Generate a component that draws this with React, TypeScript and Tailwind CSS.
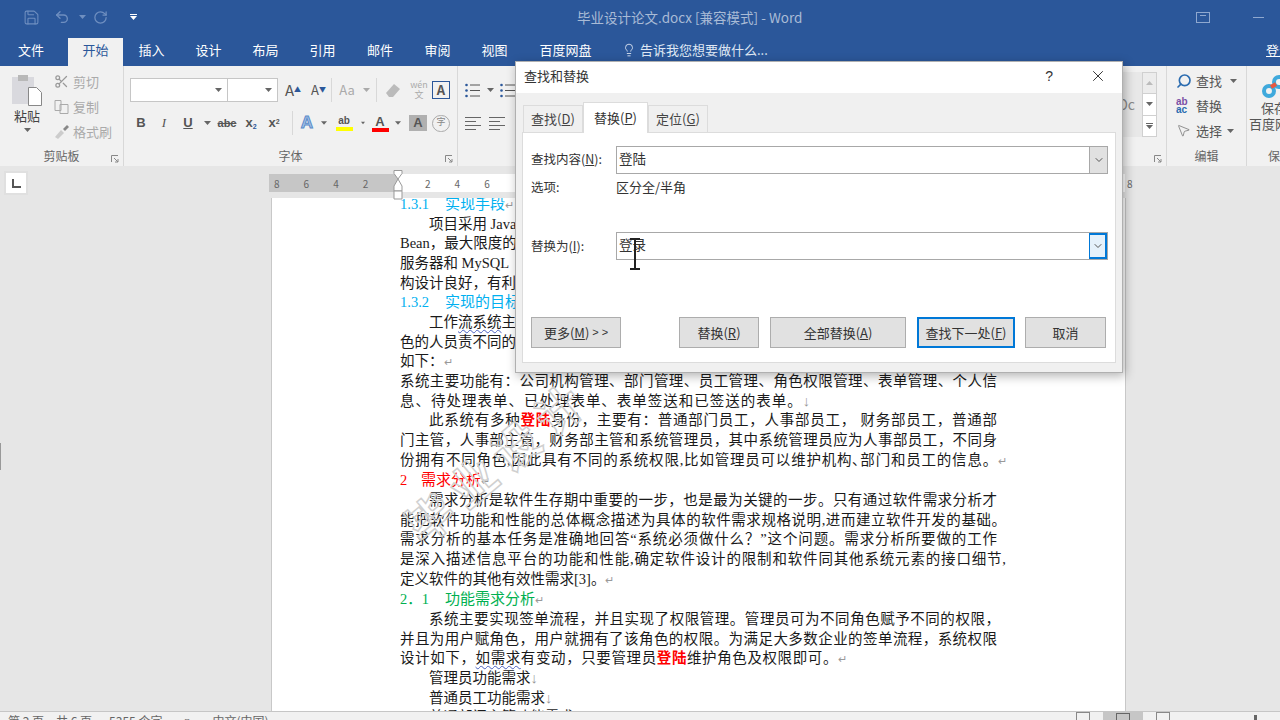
import React from "react";
import { Save, Undo2, RotateCw, Scissors, Lightbulb, Search, MousePointer2, X, ChevronDown } from "lucide-react";

const Caret = ({ c = "#666" }: { c?: string }) => (
  <svg width="7" height="4" viewBox="0 0 7 4"><path d="M0 0h7L3.5 4z" fill={c} /></svg>
);
const Corner = () => (
  <svg width="8" height="8" viewBox="0 0 8 8" fill="none" stroke="#888"><path d="M.5 7V.5H7" /><path d="M3 3l4 4M7 4v3H4" /></svg>
);
const Cell = ({ w, children, cls = "" }: { w: number; children?: React.ReactNode; cls?: string }) => (
  <div style={{ width: w }} className={"flex shrink-0 items-center justify-center " + cls}>{children}</div>
);
const Group = ({ w, label, corner, children, sep = true }: { w?: number; label: string; corner?: boolean; children: React.ReactNode; sep?: boolean }) => (
  <div style={w ? { width: w } : undefined} className={"relative flex h-full shrink-0 flex-col " + (w ? "" : "flex-1 ") + (sep ? "border-r border-[#d8d8d8]" : "")}>
    <div className="h-[80px] min-h-0">{children}</div>
    <div className="flex h-[20px] items-center justify-center text-[12px] text-[#666]">{label}</div>
    {corner && <div className="absolute bottom-[3px] right-[4px] flex"><Corner /></div>}
  </div>
);

const Lines = () => (
  <svg width="16" height="14" viewBox="0 0 16 14" stroke="#666"><path d="M0 1.5h16M0 5.5h11M0 9.5h16M0 13.5h11" /></svg>
);

const Bullets = () => (
  <svg width="15" height="15" viewBox="0 0 15 15"><g fill="#2b579a"><circle cx="1.5" cy="2" r="1.3" /><circle cx="1.5" cy="7.5" r="1.3" /><circle cx="1.5" cy="13" r="1.3" /></g><path d="M5 2h10M5 7.5h10M5 13h10" stroke="#555" /></svg>
);

const Page = ({ children, cls = "" }: { children: React.ReactNode; cls?: string }) => (
  <div className={"h-[19.68px] whitespace-nowrap leading-[19.68px] " + cls}>{children}</div>
);
const Just = ({ children, indent, w = 597 }: { children: React.ReactNode; indent?: boolean; w?: number }) => (
  <div style={{ width: w }} className={"h-[19.68px] whitespace-nowrap leading-[19.68px] [text-align:justify] [text-align-last:justify] " + (indent ? "pl-[29px]" : "")}>{children}</div>
);
const Red = ({ children }: { children: React.ReactNode }) => <span className="font-bold text-[#ff0000]">{children}</span>;
const Mark = ({ c }: { c: string }) => <span style={{ color: c }} className="text-[11px]">↵</span>;
const Head = ({ n, children, cls }: { n: string; children: React.ReactNode; cls: string }) => (
  <Page cls={cls}><span className="inline-block w-[45px]">{n}</span><span className="text-[15px]">{children}</span><Mark c="#999" /></Page>
);

const DlgBtn = ({ w, children, primary }: { w: number; children: React.ReactNode; primary?: boolean }) => (
  <div style={{ width: w }} className={"flex h-[31px] shrink-0 items-center justify-center bg-[#e1e1e1] text-[13px] text-[#333] " + (primary ? "border-2 border-[#0078d7]" : "border border-[#adadad]")}>{children}</div>
);

const Combo = ({ text, active }: { text: string; active?: boolean }) => (
  <div className="flex h-[28px] flex-1 items-stretch border border-[#a8a8a8] bg-white">
    <div className="flex-1 pl-[2px] text-[13.5px] leading-[22px] text-[#333]">{text}</div>
    <div className={"flex w-[18px] items-center justify-center border-l " + (active ? "border-2 border-[#0078d7] bg-[#e5f1fb]" : "border-[#a8a8a8] bg-[#e1e1e1]")}>
      <ChevronDown size={12} color="#555" />
    </div>
  </div>
);

const Wavy = ({ children }: { children: React.ReactNode }) => (
  <span className="underline decoration-[#4a5fc0] decoration-wavy decoration-1 underline-offset-2">{children}</span>
);

const tabs: [string, number][] = [["插入", 57], ["设计", 57], ["布局", 57], ["引用", 57], ["邮件", 58], ["审阅", 57], ["视图", 57], ["百度网盘", 85]];

export default function App() {
  return (
    <div className="relative flex h-[720px] w-[1280px] flex-col overflow-hidden bg-[#e6e6e6] font-['Noto_Sans_CJK_SC','Noto_Sans',sans-serif]">
      {/* Title bar */}
      <div className="flex h-[38px] shrink-0 items-center bg-[#2b579a] pb-[4px]">
        <div className="flex w-[577px] items-center pl-[23px]">
          <Save size={17} color="#6f8fc0" strokeWidth={1.5} />
          <Cell w={32} cls="ml-[6px]"><Undo2 size={16} color="#6f8fc0" /></Cell>
          <Cell w={8}><Caret c="#6f8fc0" /></Cell>
          <Cell w={24} cls="ml-[2px]"><RotateCw size={15} color="#6f8fc0" /></Cell>
          <div className="ml-[18px] flex flex-col items-center gap-[1px]"><div className="h-px w-[7px] bg-white" /><Caret c="#fff" /></div>
        </div>
        <div className="text-[13.5px] text-[#a9bbd6]">毕业设计论文.docx [兼容模式] - Word</div>
        <div className="ml-auto flex items-center">
          <div className="flex h-[11px] w-[14px] items-start justify-center border border-[#8fa8cf]"><div className="mt-[2px] h-[1px] w-[6px] bg-[#8fa8cf]" /></div>
          <div className="ml-[43px] mr-[16px] h-px w-[11px] bg-[#8fa8cf]" />
        </div>
      </div>
      {/* Tabs */}
      <div className="flex h-[28px] shrink-0 items-stretch bg-[#2b579a] text-[13px] text-white">
        <Cell w={62} cls="pb-[4px]">文件</Cell>
        <div className="ml-[6px] flex w-[55px] items-center justify-center bg-[#f1f1f1] pb-[4px] text-[#2b579a]">开始</div>
        {tabs.map(([t, w]) => <Cell key={t} w={w} cls="pb-[4px]">{t}</Cell>)}
        <div className="ml-[14px] flex items-center gap-[4px] pb-[4px] text-[13px] text-[#dfe7f3]"><Lightbulb size={14} strokeWidth={1.5} />告诉我您想要做什么...</div>
        <div className="ml-auto w-[14px] overflow-hidden whitespace-nowrap text-[13px] leading-[24px] underline">登录</div>
      </div>
      {/* Ribbon */}
      <div className="flex h-[100px] shrink-0 bg-[#f1f1f1] text-[#666]">
        <Group w={124} label="剪贴板" corner>
          <div className="flex h-full">
            <div className="flex w-[54px] flex-col items-center pt-[8px]">
              <svg width="32" height="32" viewBox="0 0 32 32"><rect x="1" y="3" width="22" height="27" fill="#d9d9de" /><rect x="7" y="1" width="10" height="6" fill="#b8b8b8" /><path d="M17.5 13.5h8l5 5v13h-13z" fill="#fff" stroke="#888" /></svg>
              <div className="mt-[1px] text-[13px] leading-[18px] text-[#444]">粘贴</div>
              <div className="mt-[3px]"><Caret /></div>
            </div>
            <div className="flex flex-col pt-[3px] text-[13px] text-[#aaa]">
              <div className="flex h-[25px] items-center gap-[4px]"><Scissors size={15} color="#999" />剪切</div>
              <div className="flex h-[25px] items-center gap-[4px]"><svg width="15" height="14" viewBox="0 0 15 14" fill="none" stroke="#aaa"><path d="M1 .5h6v10H1zM6 4.5h8v9H6z" /></svg>复制</div>
              <div className="flex h-[25px] items-center gap-[4px]"><svg width="15" height="14" viewBox="0 0 15 14"><path d="M1 12l6-7 3 3-6 6z" fill="#ccc" /><path d="M9 4l4-4 2 2-4 4z" fill="#888" /></svg>格式刷</div>
            </div>
          </div>
        </Group>
        <Group w={334} label="字体" corner>
          <div className="flex h-[36px] items-center pl-[6px] pt-[12px]">
            <div className="flex h-[24px] w-[98px] items-center justify-end border border-[#c6c6c6] bg-white pr-[5px]"><Caret /></div>
            <div className="flex h-[24px] w-[50px] items-center justify-end border border-l-0 border-[#c6c6c6] bg-white pr-[5px]"><Caret /></div>
            <Cell w={26} cls="ml-[2px] text-[15px] text-[#555]"><span>A<sup className="text-[7px] text-[#2b579a]">▲</sup></span></Cell>
            <Cell w={25} cls="text-[13px] text-[#555]"><span>A<sup className="text-[7px] text-[#2b579a]">▼</sup></span></Cell>
            <div className="h-[24px] w-px bg-[#d8d8d8]" />
            <Cell w={30} cls="text-[13px] text-[#aaa]">Aa</Cell><Cell w={8}><Caret c="#aaa" /></Cell>
            <div className="ml-[6px] h-[24px] w-px bg-[#d8d8d8]" />
            <Cell w={32}><svg width="16" height="16" viewBox="0 0 16 16"><path d="M1 11L9 2l6 5-7 8H4z" fill="#bbb" /></svg></Cell>
            <Cell w={16} cls="ml-[2px]"><div className="flex flex-col items-center text-[9px] leading-[10px] text-[#aaa]"><span>wén</span><span>文</span></div></Cell>
            <Cell w={18} cls="ml-[5px] h-[18px] border border-[#2b579a] text-[13px] font-bold text-[#555]">A</Cell>
          </div>
          <div className="flex h-[36px] items-center pl-[6px] pt-[6px] font-['Liberation_Sans','Noto_Sans_CJK_SC',sans-serif] text-[13px] font-bold text-[#555]">
            <Cell w={22}>B</Cell>
            <Cell w={24} cls="italic font-normal font-['Liberation_Serif',serif]">I</Cell>
            <Cell w={24} cls="underline">U</Cell>
            <Cell w={14}><Caret /></Cell>
            <Cell w={26} cls="text-[11px] line-through">abc</Cell>
            <Cell w={22}><span>x<sub className="text-[7px] text-[#2b579a]">2</sub></span></Cell>
            <Cell w={24}><span>x<sup className="text-[7px]">2</sup></span></Cell>
            <div className="ml-[6px] h-[24px] w-px bg-[#d8d8d8]" />
            <Cell w={28} cls="text-[17px] text-[#a9c4e8] [-webkit-text-stroke:1px_#5b8bc9]">A</Cell>
            <Cell w={6}><Caret /></Cell>
            <Cell w={34}><div className="flex flex-col items-center leading-[12px]"><span className="text-[10px] text-[#555]">ab</span><div className="h-[4px] w-[17px] bg-[#ffff00]" /></div></Cell>
            <Cell w={4}><Caret /></Cell>
            <Cell w={30}><div className="flex flex-col items-center leading-[13px]"><span className="text-[13px] text-[#555]">A</span><div className="h-[4px] w-[17px] bg-[#ff0000]" /></div></Cell>
            <Cell w={6}><Caret /></Cell>
            <Cell w={18} cls="ml-[8px] h-[16px] bg-[#b0b0b0] text-[#555]">A</Cell>
            <Cell w={18} cls="ml-[5px] h-[17px] rounded-full border border-[#aaa] text-[9px] font-normal text-[#888]">字</Cell>
          </div>
        </Group>
        <Group w={709} label="段落">
          <div className="flex h-full">
            <div className="flex flex-col">
              <div className="flex h-[36px] items-center pl-[7px] pt-[12px]"><Bullets /><Cell w={20}><Caret /></Cell><Bullets /></div>
              <div className="flex h-[36px] items-center gap-[8px] pl-[7px] pt-[6px]"><Lines /><Lines /></div>
            </div>
            <div className="ml-auto mr-[9px] mt-[6px] flex h-[65px] w-[35px] self-start">
              <div className="flex h-full w-[20px] items-center justify-end bg-[#e8e8e8] pr-[7px] text-[14px] text-[#888]">Oc</div>
              <div className="flex h-full w-[15px] flex-col border border-[#d0d0d0] bg-white">
                <div className="flex flex-1 items-center justify-center bg-[#ececec]"><div className="rotate-180"><Caret c="#bbb" /></div></div>
                <div className="flex flex-1 items-center justify-center border-y border-[#d0d0d0]"><Caret /></div>
                <div className="flex flex-1 flex-col items-center justify-center gap-[1px]"><div className="h-px w-[7px] bg-[#666]" /><Caret /></div>
              </div>
            </div>
          </div>
          <div className="absolute bottom-[3px] right-[4px] flex"><Corner /></div>
        </Group>
        <Group w={80} label="编辑">
          <div className="flex flex-col pl-[9px] pt-[2px] text-[13px] text-[#555]">
            <div className="flex h-[25px] items-center gap-[4px]"><Search size={16} color="#2b6cb0" strokeWidth={2.5} className="-scale-x-100" />查找<span className="ml-[4px]"><Caret /></span></div>
            <div className="flex h-[25px] items-center gap-[5px]"><div className="flex w-[15px] flex-col font-['Liberation_Sans',sans-serif] text-[10px] font-bold leading-[8px]"><span className="text-[#7b4fa5]">ab</span><span className="text-[#2b6cb0]">ac</span></div>替换</div>
            <div className="flex h-[25px] items-center gap-[5px]"><MousePointer2 size={15} color="#777" strokeWidth={1.25} />选择<Caret /></div>
          </div>
        </Group>
        <Group label="保" sep={false}>
          <div className="flex flex-col items-center pt-[8px] text-[13px] leading-[16px] text-[#555]">
            <svg width="26" height="26" viewBox="0 0 26 26" fill="none" strokeWidth="4"><circle cx="8" cy="17" r="5" stroke="#3fa9dc" /><circle cx="18" cy="8" r="5" stroke="#3fa9dc" /><path d="M10 13l5-3" stroke="#e9573f" /></svg>
            <div className="w-full overflow-hidden whitespace-nowrap pl-[14px]">保存</div>
            <div className="w-full overflow-hidden whitespace-nowrap pl-[2px]">百度网盘</div>
          </div>
        </Group>
      </div>
      {/* Ruler row */}
      <div className="flex h-[32px] shrink-0 items-center pt-[2px]">
        <Cell w={24} cls="ml-[4px] h-[24px] border-2 border-[#e0e0e0] bg-white text-[11px] font-bold text-[#555]"><svg width="9" height="9" viewBox="0 0 9 9" fill="none" stroke="#555" strokeWidth="2"><path d="M1 0v8h8" /></svg></Cell>
        <div className="ml-[241px] flex h-[18px] w-[129px] items-center gap-[24px] bg-[#c6c6c6] pl-[5px] text-[10px] text-[#666]"><span>8</span><span>6</span><span>4</span><span>2</span></div>
        <div className="flex h-[18px] w-[727px] items-center gap-[24px] bg-white pl-[27px] text-[10px] text-[#666]"><span>2</span><span>4</span><span>6</span></div>
        <div className="ml-[2px] text-[10px] text-[#666]">8</div>
      </div>
      {/* Document */}
      <div className="flex h-[513px] shrink-0 overflow-hidden">
        <div className="ml-[271px] h-full w-[855px] overflow-hidden border-x border-[#c8c8c8] bg-white pl-[128px] font-['Liberation_Serif','Noto_Sans_CJK_SC',serif] text-[14.5px] text-[#1a1a1a]">
          <div className="-mt-[3px]"><Head n="1.3.1" cls="text-[#00b0f0]">实现手段</Head></div>
          <Page cls="pl-[29px]">项目采用 Java</Page>
          <Page>Bean，最大限度的</Page>
          <Page>服务器和 MySQL</Page>
          <Page>构设计良好，有利</Page>
          <Head n="1.3.2" cls="text-[#00b0f0]">实现的目标</Head>
          <Page cls="pl-[29px]">工作<Wavy>流系统</Wavy>主</Page>
          <Page>色的人员责不同的</Page>
          <Page>如下：<Mark c="#999" /></Page>
          <Just>系统主要功能有：公司机构管理、部门管理、员工管理、角色权限管理、表单管理、个人信</Just>
          <Just w={410}>息、待处理表单、已处理表单、表单签送和已签送的表单。<span className="text-[#999]">↓</span></Just>
          <Just indent>此系统有多种<Red>登陆</Red>身份，主要有：普通部门员工，人事部员工， 财务部员工，普通部</Just>
          <Just>门主管，人事部主管，财务部主管和系统管理员，其中系统管理员应为人事部员工，不同身</Just>
          <Just w={607}>份拥有不同角色,因此具有不同的系统权限,比如管理员可以维护机构､部门和员工的信息。<Mark c="#999" /></Just>
          <Page cls="mt-[1px] text-[#ff0000]"><span className="inline-block w-[21px]">2</span><span className="text-[15px]">需求分析</span><Mark c="#999" /></Page>
          <Just indent>需求分析是软件生存期中重要的一步，也是最为关键的一步。只有通过软件需求分析才</Just>
          <Just w={606}>能把软件功能和性能的总体概念描述为具体的软件需求规格说明,进而建立软件开发的基础。</Just>
          <Just>需求分析的基本任务是准确地回答“系统必须做什么？”这个问题。需求分析所要做的工作</Just>
          <Just w={606}>是深入描述信息平台的功能和性能,确定软件设计的限制和软件同其他系统元素的接口细节,</Just>
          <Page>定义软件的其他有效性需求[3]。<Mark c="#999" /></Page>
          <div className="mt-[1px]"><Head n="2．1" cls="text-[#00b050]">功能需求分析</Head></div>
          <Just indent w={600}>系统主要实现签单流程，并且实现了权限管理。管理员可为不同角色赋予不同的权限，</Just>
          <Just>并且为用户赋角色，用户就拥有了该角色的权限。为满足大多数企业的签单流程，系统权限</Just>
          <Just w={447}>设计如下，<Wavy>如需求</Wavy>有变动，只要管理员<Red>登陆</Red>维护角色及权限即可。<Mark c="#999" /></Just>
          <Page cls="pl-[29px]">管理员功能需求<span className="text-[#999]">↓</span></Page>
          <Page cls="pl-[29px]">普通员工功能需求<span className="text-[#999]">↓</span></Page>
          <Page cls="pl-[29px]">普通部门主管功能需求<span className="text-[#999]">↓</span></Page>
        </div>
      </div>
      {/* Status bar */}
      <div className="flex h-[23px] shrink-0 items-start border-t border-[#c6c6c6] bg-[#f1f1f1] pl-[8px] text-[12px] leading-[18px] text-[#666]">
        <span>第 2 页，共 6 页</span>
        <span className="ml-[17px]">5355 个字</span>
        <span className="ml-[22px] text-[11px]">▯</span>
        <span className="ml-[22px]">中文(中国)</span>
        <div className="ml-auto mr-[97px] flex items-start">
          <Cell w={40}><div className="h-[14px] w-[14px] border border-[#888]" /></Cell>
          <Cell w={40} cls="h-[23px] bg-[#c6c6c6]"><div className="-mt-[8px] h-[14px] w-[14px] border border-[#666]" /></Cell>
          <Cell w={40}><div className="h-[14px] w-[14px] border border-[#888]" /></Cell>
        </div>
        <div className="absolute bottom-0 left-[1254px] h-[5px] w-[3px] bg-[#666]" />
      </div>
      {/* Indent markers on the ruler */}
      <svg className="absolute left-[392px] top-[170px]" width="12" height="30" viewBox="0 0 12 30" fill="#fff" stroke="#999"><path d="M2 .5h8v3L6 9 2 3.5zM6 9l4 7v5H2v-5z" /><path d="M2 21h8v8H2z" /></svg>
      {/* Watermark */}
      <div className="pointer-events-none absolute left-[385px] top-[425px] -rotate-[40deg] whitespace-nowrap text-[46px] font-bold tracking-[10px] text-transparent [-webkit-text-stroke:1.5px_#d0d0d0]">毕业设计</div>
      {/* Left edge mark */}
      <div className="absolute left-0 top-[443px] h-[27px] w-px bg-[#999]" />
      {/* Dialog */}
      <div className="absolute left-[515px] top-[61px] flex h-[312px] w-[608px] flex-col border border-[#b0b0b0] bg-[#f0f0f0] shadow-[2px_3px_10px_rgba(0,0,0,0.3)]">
        <div className="flex h-[31px] shrink-0 items-center bg-white pb-[3px] pl-[8px] text-[13px] text-[#333]">
          查找和替换
          <span className="ml-auto mr-[36px] font-['Liberation_Sans',sans-serif] text-[14px]">?</span>
          <X size={18} strokeWidth={1.3} className="mr-[15px]" color="#333" />
        </div>
        <div className="flex h-[39px] shrink-0 items-end pl-[7px] text-[13px] text-[#444]">
          <div className="flex h-[27px] w-[60px] items-center justify-center border border-b-0 border-[#dcdcdc] pb-[1px]">查找(<u>D</u>)</div>
          <div className="z-10 -mb-px flex h-[31px] w-[65px] items-center justify-center border border-b-0 border-[#dcdcdc] bg-white text-[#333]">替换(<u>P</u>)</div>
          <div className="flex h-[27px] w-[60px] items-center justify-center border border-b-0 border-[#dcdcdc] pb-[1px]">定位(<u>G</u>)</div>
        </div>
        <div className="mx-[6px] flex h-[231px] flex-col border border-[#dcdcdc] bg-white pl-[8px] pr-[7px] text-[12.5px] text-[#333]">
          <div className="mt-[13px] flex items-center">
            <div className="w-[85px] shrink-0 pb-[2px]">查找内容(<u>N</u>):</div>
            <Combo text="登陆" />
          </div>
          <div className="mt-[3px] flex h-[20px] items-center">
            <div className="w-[85px] shrink-0">选项:</div>
            <div className="text-[13px]">区分全/半角</div>
          </div>
          <div className="mt-[35px] flex items-center">
            <div className="w-[85px] shrink-0">替换为(<u>I</u>):</div>
            <Combo text="登录" active />
          </div>
          <div className="mt-[57px] flex items-center">
            <DlgBtn w={90}>更多(<u>M</u>)&nbsp;<span className="font-['Liberation_Sans',sans-serif] text-[11px]">&gt; &gt;</span></DlgBtn>
            <div className="ml-[58px]"><DlgBtn w={80}>替换(<u>R</u>)</DlgBtn></div>
            <div className="ml-[11px]"><DlgBtn w={136}>全部替换(<u>A</u>)</DlgBtn></div>
            <div className="ml-[11px]"><DlgBtn w={98} primary>查找下一处(<u>F</u>)</DlgBtn></div>
            <div className="ml-[10px]"><DlgBtn w={81}>取消</DlgBtn></div>
          </div>
        </div>
      </div>
      {/* I-beam cursor */}
      <svg className="absolute left-[628px] top-[238px]" width="14" height="32" viewBox="0 0 14 32" fill="none" stroke="#222" strokeWidth="2"><path d="M2 1h10M7 1v30M2 31h10" /></svg>
    </div>
  );
}
